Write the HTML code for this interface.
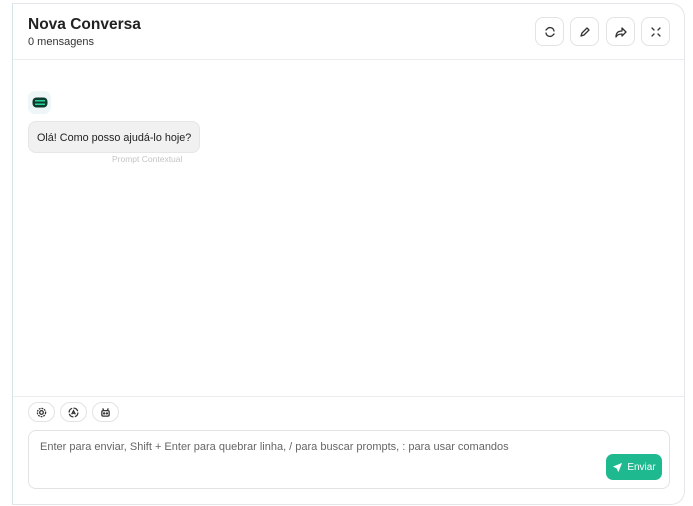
<!DOCTYPE html>
<html><head><meta charset="utf-8"><style>
*{box-sizing:border-box;margin:0;padding:0}
body{width:693px;height:506px;background:#fff;font-family:"Liberation Sans",sans-serif;position:relative;overflow:hidden}
.panel{position:absolute;left:12px;top:3px;width:673px;height:502px;border:1px solid #e3e6e8;border-left-color:#d6e4ea;border-radius:0 14px 14px 0;background:#fff}
.hdr{position:absolute;left:0;top:0;right:0;height:56px;border-bottom:1px solid #ececec}
h1{position:absolute;left:15px;top:12px;font-size:15.5px;font-weight:bold;color:#222}
.sub{position:absolute;left:15px;top:32px;font-size:11px;color:#333}
.btn{position:absolute;top:13px;width:29px;height:29px;border:1px solid #e3e3e3;border-radius:8px;display:flex;align-items:center;justify-content:center}
.btn svg{width:12px;height:12px;fill:none;stroke:#333;stroke-width:1.3;stroke-linecap:round;stroke-linejoin:round}
.av{position:absolute;left:15px;top:87px;width:23px;height:23px;border-radius:7px;background:#eef6f8;display:flex;align-items:center;justify-content:center}
.bub{position:absolute;left:15px;top:117px;padding:0 8px;height:32px;line-height:32px;background:#f1f1f1;border:1px solid #e6e6e6;border-radius:8px;font-size:10.8px;color:#222}
.pc{position:absolute;left:99px;top:150px;font-size:8.5px;color:#c4c4c4}
.ftr{position:absolute;left:0;right:0;top:392px;border-top:1px solid #ececec}
.ib{position:absolute;top:398px;width:27px;height:20px;border:1px solid #e3e3e3;border-radius:10px;display:flex;align-items:center;justify-content:center}
.ib svg{width:11px;height:11px;fill:none;stroke:#333;stroke-width:1.4}
.inp{position:absolute;left:15px;top:426px;width:642px;height:59px;border:1px solid #e3e3e3;border-radius:8px}
.ph{position:absolute;left:11px;top:10px;font-size:11px;color:#666}
.send{position:absolute;right:7px;top:23px;width:56px;height:26px;background:#1fb98f;border-radius:7px;color:#fff;font-size:10px;display:flex;align-items:center;justify-content:center;gap:4px}
</style></head><body>
<div class="panel">
<div class="hdr">
<h1>Nova Conversa</h1><div class="sub">0 mensagens</div>
<div class="btn" style="left:522px"><svg viewBox="0 0 12 12"><path d="M10 5A4 4 0 0 0 3 3L2 4M2 7a4 4 0 0 0 7 2l1-1"/></svg></div>
<div class="btn" style="left:557px"><svg viewBox="0 0 12 12"><path d="M2 10l1-3 5-5 2 2-5 5z"/></svg></div>
<div class="btn" style="left:593px"><svg viewBox="0 0 12 12"><path d="M7 2l4 4-4 4V8C4 8 2 9 1 11c0-4 2-6 6-6z"/></svg></div>
<div class="btn" style="left:628px"><svg viewBox="0 0 12 12"><path d="M2 2l2 2M10 2L8 4M2 10l2-2M10 10L8 8"/></svg></div>
</div>
<div class="av"><svg width="16" height="11" viewBox="0 0 16 11"><rect x="0.5" y="0.5" width="15" height="10" rx="4" fill="#0d3b2e"/><rect x="3" y="3" width="10" height="1.5" fill="#2ad39b"/><rect x="3" y="6.5" width="10" height="1.5" fill="#2ad39b"/></svg></div>
<div class="bub">Olá! Como posso ajudá-lo hoje?</div>
<div class="pc">Prompt Contextual</div>
<div class="ftr"></div>
<div class="ib" style="left:15px"><svg viewBox="0 0 12 12"><circle cx="6" cy="6" r="2"/><circle cx="6" cy="6" r="4.5" stroke-dasharray="2 1"/></svg></div>
<div class="ib" style="left:47px"><svg viewBox="0 0 12 12"><circle cx="6" cy="6" r="4.8" stroke-dasharray="6 1.5"/><path d="M4 8l2-4 2 4M4.8 6.8h2.4"/></svg></div>
<div class="ib" style="left:79px"><svg viewBox="0 0 12 12"><rect x="2" y="4" width="8" height="6" rx="1.5"/><path d="M4 4L3 1.5M8 4l1-2.5"/><circle cx="4.5" cy="7" r=".6"/><circle cx="7.5" cy="7" r=".6"/></svg></div>
<div class="inp"><div class="ph">Enter para enviar, Shift + Enter para quebrar linha, / para buscar prompts, : para usar comandos</div>
<div class="send"><svg width="11" height="11" viewBox="0 0 12 12"><path d="M11 1L1 5l4 2 2 4z" fill="#fff"/></svg>Enviar</div></div>
</div>
</body></html>
